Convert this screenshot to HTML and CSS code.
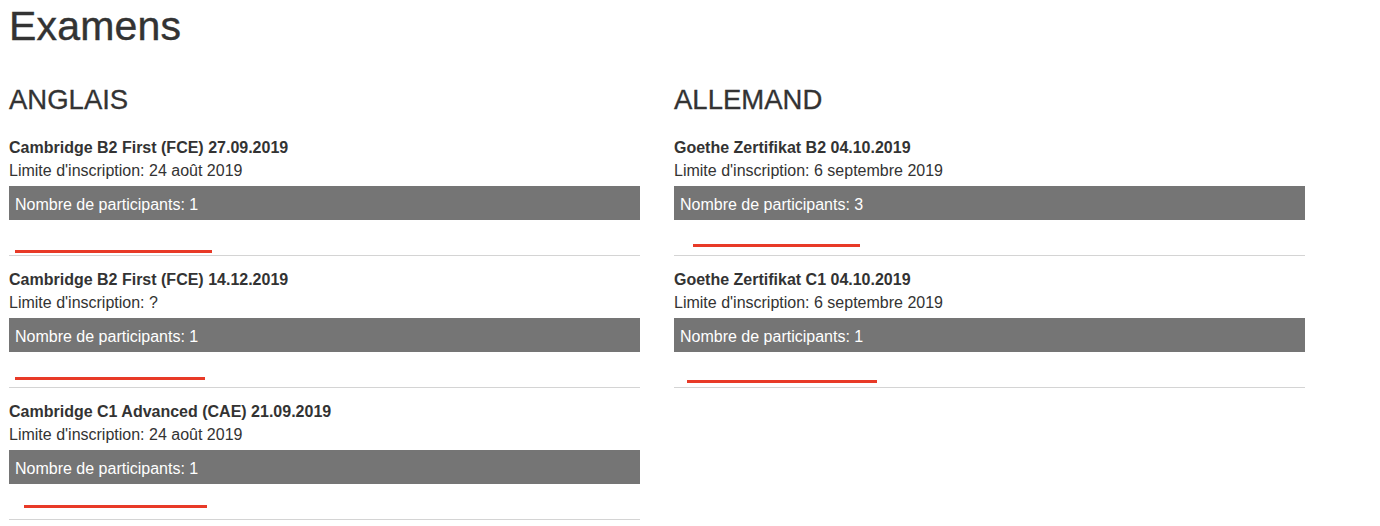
FILE: index.html
```html
<!DOCTYPE html>
<html lang="fr">
<head>
<meta charset="utf-8">
<title>Examens</title>
<link rel="stylesheet" href="styles.css">
</head>
<body>
<div class="page">
  <h1 class="page-title">Examens</h1>
  <div class="columns">
    <section class="column">
      <h2 class="column-title">ANGLAIS</h2>
      <div class="exam">
        <div class="exam-name">Cambridge B2 First (FCE) 27.09.2019</div>
        <div class="exam-limit">Limite d'inscription: 24 août 2019</div>
        <div class="exam-bar">Nombre de participants: 1</div>
        <div class="exam-foot"><span class="mark mark-a"></span></div>
      </div>
      <div class="exam">
        <div class="exam-name">Cambridge B2 First (FCE) 14.12.2019</div>
        <div class="exam-limit">Limite d'inscription: ?</div>
        <div class="exam-bar">Nombre de participants: 1</div>
        <div class="exam-foot"><span class="mark mark-b"></span></div>
      </div>
      <div class="exam">
        <div class="exam-name">Cambridge C1 Advanced (CAE) 21.09.2019</div>
        <div class="exam-limit">Limite d'inscription: 24 août 2019</div>
        <div class="exam-bar">Nombre de participants: 1</div>
        <div class="exam-foot"><span class="mark mark-c"></span></div>
      </div>
    </section>
    <section class="column">
      <h2 class="column-title">ALLEMAND</h2>
      <div class="exam">
        <div class="exam-name">Goethe Zertifikat B2 04.10.2019</div>
        <div class="exam-limit">Limite d'inscription: 6 septembre 2019</div>
        <div class="exam-bar">Nombre de participants: 3</div>
        <div class="exam-foot"><span class="mark mark-d"></span></div>
      </div>
      <div class="exam">
        <div class="exam-name">Goethe Zertifikat C1 04.10.2019</div>
        <div class="exam-limit">Limite d'inscription: 6 septembre 2019</div>
        <div class="exam-bar">Nombre de participants: 1</div>
        <div class="exam-foot"><span class="mark mark-e"></span></div>
      </div>
    </section>
  </div>
</div>
</body>
</html>
```

FILE: styles.css
```css
html, body {
  margin: 0;
  padding: 0;
  background: #ffffff;
}

body {
  font-family: "Liberation Sans", Arial, Helvetica, sans-serif;
  color: #333333;
}

.page {
  padding: 4px 9px 0 9px;
}

.page-title {
  margin: 0;
  font-size: 41px;
  line-height: 44px;
  font-weight: 400;
  color: #333333;
  letter-spacing: 0.2px;
  -webkit-text-stroke: 0.4px #333333;
}

.columns {
  display: grid;
  grid-template-columns: 631px 631px;
  column-gap: 34px;
  margin-top: 37px;
  align-items: start;
}

.column-title {
  margin: 0 0 9px 0;
  font-size: 27.5px;
  line-height: 30px;
  font-weight: 400;
  color: #333333;
  -webkit-text-stroke: 0.3px #333333;
}

.exam {
  padding-top: 12px;
  border-bottom: 1px solid #d4d4d4;
}

.exam-name {
  font-size: 16px;
  line-height: 24px;
  font-weight: 700;
}

.exam-limit {
  font-size: 16px;
  line-height: 22px;
}

.exam-bar {
  margin-top: 4px;
  height: 32px;
  padding-top: 2px;
  line-height: 34px;
  padding-left: 6px;
  background: #757575;
  color: #ffffff;
  font-size: 16px;
}

.exam-foot {
  height: 35px;
  display: flex;
  flex-direction: column;
}

.mark {
  display: block;
  height: 3px;
  background: #e83a28;
}

.mark-a { margin: 30px 0 0 6px; width: 197px; }
.mark-b { margin: 25px 0 0 6px; width: 190px; }
.mark-c { margin: 21px 0 0 15px; width: 183px; }
.mark-d { margin: 24px 0 0 19px; width: 167px; }
.mark-e { margin: 28px 0 0 13px; width: 190px; }
```
